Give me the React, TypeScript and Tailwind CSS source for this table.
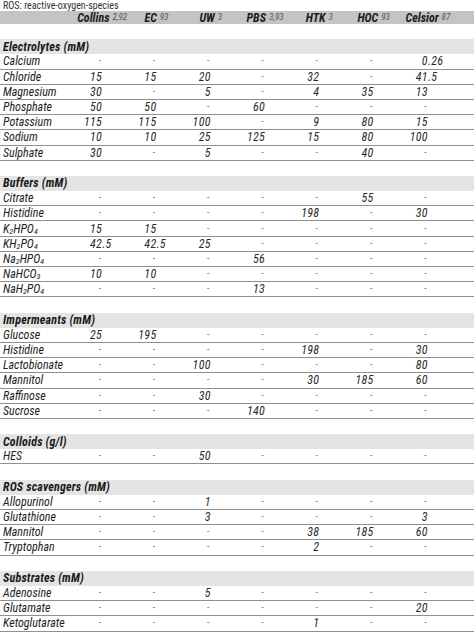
import React from "react";

type Row = { label: React.ReactNode; values: string[] };
type Section = { title: string; rows: Row[] };

const columns = [
  { name: "Collins", ref: "2,92" },
  { name: "EC", ref: "93" },
  { name: "UW", ref: "3" },
  { name: "PBS", ref: "3,93" },
  { name: "HTK", ref: "3" },
  { name: "HOC", ref: "93" },
  { name: "Celsior", ref: "87" },
];

const Sub = ({ children }: { children: React.ReactNode }) => (
  <sub className="text-[8px] relative top-[1px]">{children}</sub>
);

const sections: Section[] = [
  {
    title: "Electrolytes (mM)",
    rows: [
      { label: "Calcium", values: ["-", "-", "-", "-", "-", "-", "0.26"] },
      { label: "Chloride", values: ["15", "15", "20", "-", "32", "-", "41.5"] },
      { label: "Magnesium", values: ["30", "-", "5", "-", "4", "35", "13"] },
      { label: "Phosphate", values: ["50", "50", "-", "60", "-", "-", "-"] },
      { label: "Potassium", values: ["115", "115", "100", "-", "9", "80", "15"] },
      { label: "Sodium", values: ["10", "10", "25", "125", "15", "80", "100"] },
      { label: "Sulphate", values: ["30", "-", "5", "-", "-", "40", "-"] },
    ],
  },
  {
    title: "Buffers (mM)",
    rows: [
      { label: "Citrate", values: ["-", "-", "-", "-", "-", "55", "-"] },
      { label: "Histidine", values: ["-", "-", "-", "-", "198", "-", "30"] },
      {
        label: (
          <>
            K<Sub>2</Sub>HPO<Sub>4</Sub>
          </>
        ),
        values: ["15", "15", "-", "-", "-", "-", "-"],
      },
      {
        label: (
          <>
            KH<Sub>2</Sub>PO<Sub>4</Sub>
          </>
        ),
        values: ["42.5", "42.5", "25", "-", "-", "-", "-"],
      },
      {
        label: (
          <>
            Na<Sub>2</Sub>HPO<Sub>4</Sub>
          </>
        ),
        values: ["-", "-", "-", "56", "-", "-", "-"],
      },
      {
        label: (
          <>
            NaHCO<Sub>3</Sub>
          </>
        ),
        values: ["10", "10", "-", "-", "-", "-", "-"],
      },
      {
        label: (
          <>
            NaH<Sub>2</Sub>PO<Sub>4</Sub>
          </>
        ),
        values: ["-", "-", "-", "13", "-", "-", "-"],
      },
    ],
  },
  {
    title: "Impermeants (mM)",
    rows: [
      { label: "Glucose", values: ["25", "195", "-", "-", "-", "-", "-"] },
      { label: "Histidine", values: ["-", "-", "-", "-", "198", "-", "30"] },
      { label: "Lactobionate", values: ["-", "-", "100", "-", "-", "-", "80"] },
      { label: "Mannitol", values: ["-", "-", "-", "-", "30", "185", "60"] },
      { label: "Raffinose", values: ["-", "-", "30", "-", "-", "-", "-"] },
      { label: "Sucrose", values: ["-", "-", "-", "140", "-", "-", "-"] },
    ],
  },
  {
    title: "Colloids (g/l)",
    rows: [{ label: "HES", values: ["-", "-", "50", "-", "-", "-", "-"] }],
  },
  {
    title: "ROS scavengers (mM)",
    rows: [
      { label: "Allopurinol", values: ["-", "-", "1", "-", "-", "-", "-"] },
      { label: "Glutathione", values: ["-", "-", "3", "-", "-", "-", "3"] },
      { label: "Mannitol", values: ["-", "-", "-", "-", "38", "185", "60"] },
      { label: "Tryptophan", values: ["-", "-", "-", "-", "2", "-", "-"] },
    ],
  },
  {
    title: "Substrates (mM)",
    rows: [
      { label: "Adenosine", values: ["-", "-", "5", "-", "-", "-", "-"] },
      { label: "Glutamate", values: ["-", "-", "-", "-", "-", "-", "20"] },
      { label: "Ketoglutarate", values: ["-", "-", "-", "-", "1", "-", "-"] },
    ],
  },
];

const grid = "grid grid-cols-[75px_repeat(7,54.3px)_1fr]";

// integer part ends at the column centre, decimals hang to the right
function Value({ v }: { v: string }) {
  if (v === "-") {
    return (
      <div className="flex">
        <span className="w-1/2 text-right pr-[1px] text-[#8a8a8a] text-[10px]">-</span>
      </div>
    );
  }
  const [int, dec] = v.split(".");
  return (
    <div className="flex">
      <span className="w-1/2 text-right">{int}</span>
      <span className="w-1/2 text-left">{dec ? "." + dec : ""}</span>
    </div>
  );
}

export default function App() {
  return (
    <div
      className="w-[474px] h-[633px] overflow-hidden bg-white text-[#222]"
      style={{ fontFamily: '"Liberation Sans Narrow", "Roboto Condensed", "Liberation Sans", sans-serif' }}
    >
      <div className="h-[11px] pl-[3px] text-[10px] leading-[11px] text-[#333]">
        ROS: reactive-oxygen-species
      </div>

      <div className={`${grid} h-[13px] bg-[#c4c4c4] items-center`}>
        <div />
        {columns.map((c) => (
          <div key={c.name} className="flex justify-center items-baseline leading-none pt-[1px]">
            <span className="text-[12px] font-bold italic text-[#1c1c1c]">{c.name}</span>
            <span className="text-[9px] italic text-[#555] ml-[3px] relative -top-[2px]">
              {c.ref}
            </span>
          </div>
        ))}
        <div />
      </div>

      {sections.map((s) => (
        <div key={s.title}>
          <div className="h-[15.2px]" />
          <div className="h-[15.2px] bg-[#e4e4e4] flex items-center pl-[3px]">
            <span className="text-[12px] font-bold italic tracking-[0.2px] leading-none text-[#1a1a1a]">
              {s.title}
            </span>
          </div>
          {s.rows.map((r, i) => (
            <div
              key={i}
              className={`${grid} h-[15.2px] items-center border-b border-[#8f8f8f] text-[12px] italic leading-none`}
            >
              <div className="pl-[3px] text-[#1e1e1e] whitespace-nowrap italic">{r.label}</div>
              {r.values.map((v, j) => (
                <div key={j} className="text-[#2a2a2a] tracking-[0.3px]">
                  <Value v={v} />
                </div>
              ))}
              <div />
            </div>
          ))}
        </div>
      ))}
    </div>
  );
}
